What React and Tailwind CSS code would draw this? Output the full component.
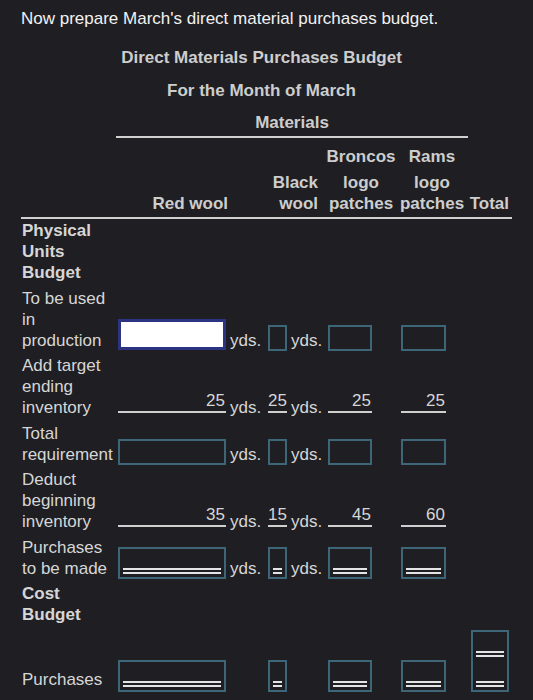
import React from 'react';

const font = { fontFamily: '"Liberation Sans", Arial, sans-serif' };

// plain bordered answer box
const Box = ({ w, focused }) =>
    focused ? (
        <div className={`${w} shrink-0 h-[31px] mb-[1px] bg-white border-[3px] border-[#2c3380]`} />
    ) : (
        <div className={`${w} shrink-0 h-[26px] border-2 border-[#3d6779]`} />
    );

// box with the double rule for totals
const DBox = ({ w, tall }) => (
    <div className={`${w} shrink-0 border-2 border-[#3d6779] p-[3px]`}>
        {tall && <div className="h-[22px] border-b-[6px] border-double border-[#e4e4e4]" />}
        <div className={`${tall ? 'h-[30px]' : 'h-[22px]'} border-b-[6px] border-double border-[#e4e4e4]`} />
    </div>
);

const Val = ({ w, children }) => (
    <div className={`${w} shrink-0 mb-[5px] text-right pr-px border-b-2 border-[#cfcfcf]`}>{children}</div>
);

const Yds = ({ w }) => <div className={`${w} shrink-0 pl-[4px]`}>yds.</div>;
const Gap = ({ w }) => <div className={`${w} shrink-0`} />;

const Row = ({ label, bold, children, className = 'mt-[4.5px]', labelClass = '' }) => (
    <div className={`flex items-end ${className}`}>
        <div className={`w-[97px] shrink-0 pl-px ${bold ? 'font-bold' : ''} ${labelClass}`}>{label}</div>
        {children}
    </div>
);

const App = () => {
    return (
        <div className="min-h-screen w-[533px] bg-[#1f1f23] text-[#d6d6d6] text-[17px] leading-[21px]" style={font}>
            <div className="pt-[8px] pl-[21px] text-[#f2f2f2]">Now prepare March's direct material purchases budget.</div>

            <div className="ml-[21px] w-[481px] text-center font-bold text-[#cdcdcd]">
                <div className="mt-[18px]">Direct Materials Purchases Budget</div>
                <div className="mt-[12px]">For the Month of March</div>
            </div>
            <div className="ml-[116px] w-[352px] mt-[11px] pb-[3px] text-center font-bold text-[#cdcdcd] border-b-2 border-[#d0d0d0]">
                Materials
            </div>

            {/* column headings */}
            <div className="ml-[21px] w-[491px] mt-[8px] pb-[2.5px] flex items-end font-bold text-[#cdcdcd] border-b-2 border-[#d0d0d0]">
                <Gap w="w-[97px]" />
                <div className="w-[110px] shrink-0 text-right">Red wool</div>
                <Gap w="w-[40px]" />
                <div className="w-[50px] shrink-0 text-right">Black<br />wool</div>
                <Gap w="w-[8px]" />
                <div className="w-[70px] shrink-0 text-center">
                    <div className="mb-[5px]">Broncos</div>logo<br />patches
                </div>
                <div className="w-[72px] shrink-0 text-center">
                    <div className="mb-[5px]">Rams</div>logo<br />patches
                </div>
                <div className="w-[41px] shrink-0 text-right">Total</div>
            </div>

            <div className="ml-[21px] pb-[6px]">
                <Row label="Physical Units Budget" bold className="mt-[1.5px]" />

                <Row label="To be used in production">
                    <Box w="w-[108px]" focused />
                    <Yds w="w-[42px]" />
                    <Box w="w-[19px]" />
                    <Yds w="w-[41px]" />
                    <Box w="w-[44px]" />
                    <Gap w="w-[29px]" />
                    <Box w="w-[45px]" />
                </Row>

                <Row label="Add target ending inventory">
                    <Val w="w-[108px]">25</Val>
                    <Yds w="w-[42px]" />
                    <Val w="w-[19px]">25</Val>
                    <Yds w="w-[41px]" />
                    <Val w="w-[44px]">25</Val>
                    <Gap w="w-[29px]" />
                    <Val w="w-[45px]">25</Val>
                </Row>

                <Row label="Total requirement">
                    <Box w="w-[108px]" />
                    <Yds w="w-[42px]" />
                    <Box w="w-[19px]" />
                    <Yds w="w-[41px]" />
                    <Box w="w-[44px]" />
                    <Gap w="w-[29px]" />
                    <Box w="w-[45px]" />
                </Row>

                <Row label="Deduct beginning inventory">
                    <Val w="w-[108px]">35</Val>
                    <Yds w="w-[42px]" />
                    <Val w="w-[19px]">15</Val>
                    <Yds w="w-[41px]" />
                    <Val w="w-[44px]">45</Val>
                    <Gap w="w-[29px]" />
                    <Val w="w-[45px]">60</Val>
                </Row>

                <Row label="Purchases to be made">
                    <DBox w="w-[108px]" />
                    <Yds w="w-[42px]" />
                    <DBox w="w-[19px]" />
                    <Yds w="w-[41px]" />
                    <DBox w="w-[44px]" />
                    <Gap w="w-[29px]" />
                    <DBox w="w-[45px]" />
                </Row>

                <Row label="Cost Budget" bold />

                <Row label="Purchases" className="mt-[5px]" labelClass="pb-[2px]">
                    <DBox w="w-[108px]" />
                    <Gap w="w-[42px]" />
                    <DBox w="w-[19px]" />
                    <Gap w="w-[41px]" />
                    <DBox w="w-[44px]" />
                    <Gap w="w-[29px]" />
                    <DBox w="w-[45px]" />
                    <Gap w="w-[25px]" />
                    <DBox w="w-[38px]" tall />
                </Row>
            </div>
        </div>
    );
};

export default App;
